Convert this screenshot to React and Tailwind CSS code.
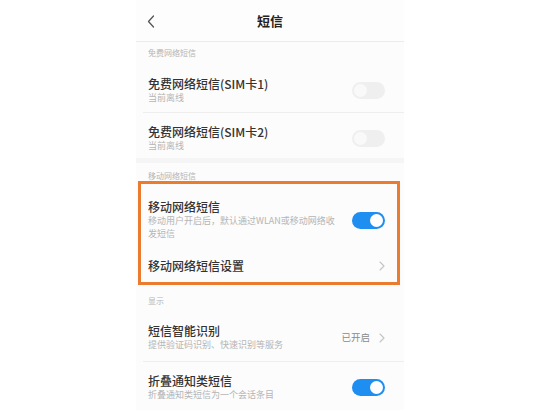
import React from 'react';

const font = { fontFamily: '"Noto Sans CJK SC", "Noto Sans", sans-serif' };

const Toggle = ({ on }) => (
  <div
    className={`w-[33px] h-[17px] rounded-full flex items-center px-[2px] shrink-0 ${
      on ? 'bg-[#1f8ef1] justify-end' : 'bg-[#efefef] justify-start'
    }`}
  >
    <div className={`w-[13px] h-[13px] rounded-full ${on ? 'bg-white' : 'bg-[#f9f9f9]'}`} />
  </div>
);

const Chevron = () => (
  <svg width="6" height="10" viewBox="0 0 6 10" className="shrink-0">
    <path d="M1 1l4 4-4 4" fill="none" stroke="#c4c4c4" strokeWidth="1.1" strokeLinecap="round" strokeLinejoin="round" />
  </svg>
);

const SectionLabel = ({ children, className = '' }) => (
  <div className={`pl-[12px] text-[8px] leading-[10px] text-[#b4b4b4] ${className}`}>{children}</div>
);

const Row = ({ title, sub, right, className = '' }) => (
  <div className={`flex items-center justify-between ${className}`}>
    <div className="flex flex-col">
      <div className="text-[12px] leading-[14px] font-medium text-[#333]">{title}</div>
      {sub && <div className="max-w-[188px] text-[9px] leading-[13px] text-[#b5b5b5]">{sub}</div>}
    </div>
    {right}
  </div>
);

export default function App() {
  return (
    <div className="w-[540px] h-[420px] bg-white overflow-hidden" style={font}>
      <div className="mx-auto w-[268px] min-h-[410px] bg-[#fcfcfc]">
        {/* header */}
        <div className="h-[42px] flex items-center relative border-b border-[#ececec] bg-[#fdfdfd]">
          <svg width="8" height="13" viewBox="0 0 8 13" className="absolute left-[11px] top-[15px]">
            <path d="M6.5 1L1.5 6.5l5 5.5" fill="none" stroke="#555" strokeWidth="1.3" strokeLinecap="round" strokeLinejoin="round" />
          </svg>
          <div className="w-full text-center text-[13px] font-bold text-[#222]">短信</div>
        </div>

        <SectionLabel className="pt-[6px] pb-[4px]">免费网络短信</SectionLabel>

        <Row
          className="pl-[12px] pr-[19px] pt-[15px] pb-[8px]"
          title="免费网络短信(SIM卡1)"
          sub="当前离线"
          right={<Toggle />}
        />
        <div className="ml-[7px] h-px bg-[#eeeeee]" />
        <Row
          className="pl-[12px] pr-[19px] pt-[12px] pb-[3px]"
          title="免费网络短信(SIM卡2)"
          sub="当前离线"
          right={<Toggle />}
        />

        <div className="mt-[3px] h-[5px] bg-[#f5f5f5]" />
        <SectionLabel className="pt-[8px]">移动网络短信</SectionLabel>

        {/* highlighted block */}
        <div className="ml-[2px] mr-[4px] border-[3px] border-[#ea7b2f]">
          <Row
            className="pl-[7px] pr-[12px] pt-[16px] pb-[10px]"
            title="移动网络短信"
            sub="移动用户开启后，默认通过WLAN或移动网络收发短信"
            right={<Toggle on />}
          />
          <div className="h-[32px] pl-[7px] pr-[12px] flex items-center justify-between">
            <div className="text-[12px] font-medium text-[#333]">移动网络短信设置</div>
            <Chevron />
          </div>
        </div>

        <SectionLabel className="pt-[11px] pb-[7px]">显示</SectionLabel>

        <Row
          className="pl-[12px] pr-[19px] pt-[11px] pb-[10px]"
          title="短信智能识别"
          sub="提供验证码识别、快速识别等服务"
          right={
            <div className="flex items-center gap-[9px]">
              <span className="text-[9.5px] text-[#8a8a8a]">已开启</span>
              <Chevron />
            </div>
          }
        />
        <div className="ml-[7px] h-px bg-[#eeeeee]" />
        <Row
          className="pl-[12px] pr-[19px] pt-[12px] pb-[8px]"
          title="折叠通知类短信"
          sub="折叠通知类短信为一个会话条目"
          right={<Toggle on />}
        />
      </div>
    </div>
  );
}
